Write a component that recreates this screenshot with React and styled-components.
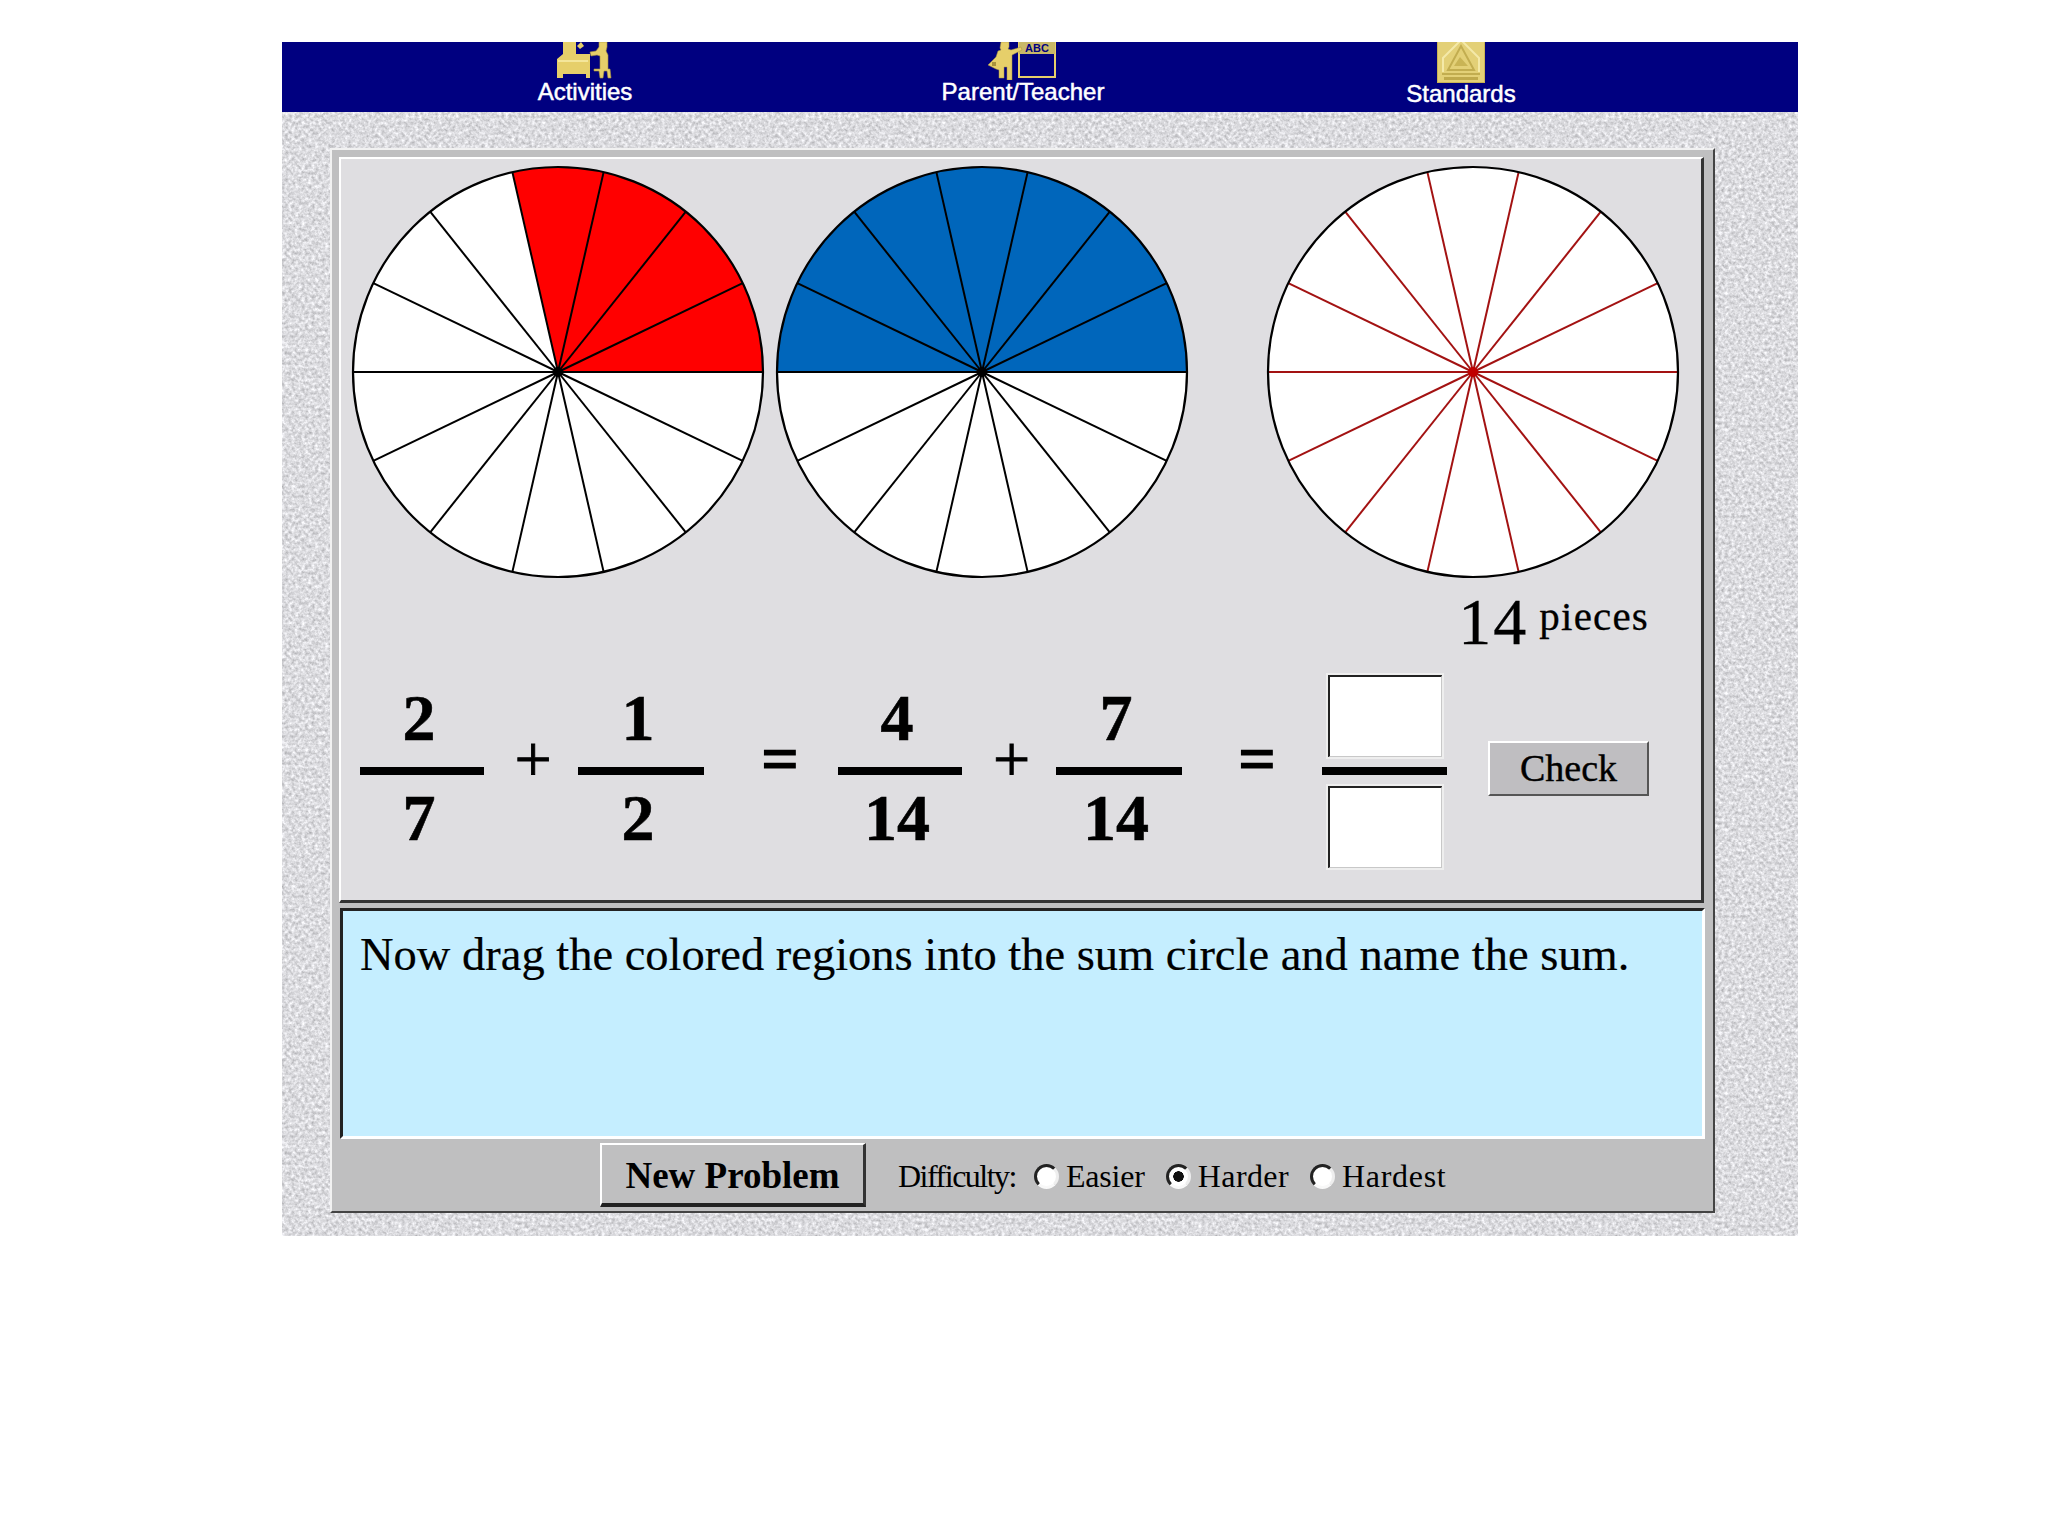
import React from 'react';
import styled, { createGlobalStyle } from 'styled-components';

const noise = "url(\"data:image/svg+xml,%3Csvg xmlns='http://www.w3.org/2000/svg' width='400' height='400'%3E%3Cfilter id='n' color-interpolation-filters='sRGB'%3E%3CfeTurbulence type='fractalNoise' baseFrequency='0.3' numOctaves='3' seed='7' stitchTiles='stitch'/%3E%3CfeColorMatrix values='0.42 0 0 0 0.65 0.42 0 0 0 0.65 0.42 0 0 0 0.665 0 0 0 0 1'/%3E%3C/filter%3E%3Crect width='400' height='400' filter='url(%23n)'/%3E%3C/svg%3E\")";

const GlobalStyle = createGlobalStyle`
	body {
		margin: 0;
		background: #fff;
		font-family: "Liberation Serif", "Times New Roman", serif;
		color: #000;
	}
`;

const Frame = styled.div`
	width: 1516px;
	height: 1194px;
	margin: 42px 0 0 282px;
	background-color: #dcdcdf;
	background-image: ${noise};
`;

const NavBar = styled.nav`
	display: grid;
	grid-template-columns: repeat(3, 438px);
	height: 70px;
	padding-left: 84px;
	background: #000080;
`;

const NavItem = styled.a`
	display: flex;
	flex-direction: column;
	align-items: center;
	color: #fff;
`;

const NavIcon = styled.div`
	height: 38px;
`;

const NavLabel = styled.span`
	margin-top: ${props => props.$drop || 0}px;
	font-family: "Liberation Sans", Arial, sans-serif;
	font-size: 24px;
	line-height: 24px;
	-webkit-text-stroke: 0.5px #fff;
`;

const Panel = styled.div`
	box-sizing: border-box;
	width: 1385px;
	height: 1065px;
	margin: 36px 0 0 48px;
	padding: 7px 9px 0 7px;
	background: #bfbfc0;
	border-style: solid;
	border-width: 2px;
	border-color: #f1f1f1 #444 #444 #f1f1f1;
`;

const Workspace = styled.div`
	box-sizing: border-box;
	height: 746px;
	background: #dfdee1;
	border-style: solid;
	border-width: 2px 3px 3px 2px;
	border-color: #fff #333 #333 #fff;
`;

const WheelRow = styled.div`
	display: flex;
	gap: 10px;
	padding: 6px 0 0 10px;
`;

const Wheel = styled.svg`
	display: block;
	width: 414px;
	height: 414px;
	margin-left: ${props => props.$offset || 0}px;
`;

const PiecesRow = styled.div`
	display: flex;
	justify-content: flex-end;
	align-items: flex-start;
	gap: 11px;
	margin-top: 10px;
	padding-right: 52px;
`;

const PieceCount = styled.span`
	font-size: 66px;
	line-height: 66px;
	letter-spacing: 2px;
	-webkit-text-stroke: 0.3px #000;
`;

const PieceLabel = styled.span`
	margin-top: 4px;
	font-size: 41px;
	line-height: 46px;
	letter-spacing: 1.2px;
	-webkit-text-stroke: 0.3px #000;
`;

const Equation = styled.div`
	display: flex;
	align-items: flex-start;
	margin-top: 19px;
	padding-left: 19px;
`;

const Fraction = styled.div`
	display: grid;
	grid-template-rows: 93px 8px 94px;
	justify-items: center;
	width: ${props => props.$width}px;
`;

const Bar = styled.div`
	width: 100%;
	background: #000;
`;

const Number = styled.div`
	font-size: 66px;
	line-height: 66px;
	font-weight: 700;
	padding-right: 6px;
	-webkit-text-stroke: 0.6px #000;
	align-self: ${props => (props.$top ? 'end' : 'start')};
	margin: ${props => (props.$top ? '0 0 16px' : '10px 0 0')};
`;

const Operator = styled.div`
	width: ${props => props.$width}px;
	box-sizing: border-box;
	padding-left: ${props => props.$shift}px;
	margin-top: ${props => props.$top}px;
	text-align: center;
	font-size: 66px;
	line-height: 66px;
	font-weight: ${props => (props.$bold ? 700 : 400)};
	-webkit-text-stroke: ${props => (props.$bold ? 1.2 : 0.9)}px #000;
`;

const AnswerBox = styled.input`
	box-sizing: border-box;
	display: block;
	width: 116px;
	height: 84px;
	margin: ${props => (props.$top ? 0 : '10px 0 0')};
	padding: 0;
	background: #fff;
	border-style: solid;
	border-width: 3px 2px 2px 3px;
	border-color: #222 #c8c8c8 #c8c8c8 #222;
	outline: 2px solid #eee;
	outline-offset: -1px;
`;

const CheckButton = styled.button`
	box-sizing: border-box;
	width: 161px;
	height: 55px;
	margin: 67px 0 0 41px;
	padding: 0 0 2px;
	background: #bfbec1;
	border-style: solid;
	border-width: 2px;
	border-color: #fff #555 #555 #fff;
	font-family: inherit;
	font-size: 38px;
	color: #000;
	-webkit-text-stroke: 0.4px #000;
`;

const Message = styled.div`
	box-sizing: border-box;
	width: 1365px;
	height: 231px;
	margin: 5px 0 0 1px;
	padding: 17px 0 0 17px;
	background: #c5eeff;
	border-style: solid;
	border-width: 3px;
	border-color: #222 #fff #fff #222;
	font-size: 46.5px;
	line-height: 54px;
	white-space: nowrap;
	-webkit-text-stroke: 0.2px #000;
`;

const Toolbar = styled.div`
	display: flex;
	align-items: center;
	height: 72px;
	padding-left: 261px;
`;

const NewButton = styled.button`
	box-sizing: border-box;
	width: 266px;
	height: 64px;
	margin-right: 32px;
	padding: 3px 0 0;
	background: #bfbfc0;
	border-style: solid;
	border-width: 2px 3px 4px 2px;
	border-color: #fff #333 #222 #fff;
	font-family: inherit;
	font-size: 37px;
	font-weight: 700;
	color: #000;
`;

const Difficulty = styled.div`
	display: flex;
	align-items: center;
	gap: 21px;
	padding-top: 2px;
	font-size: 32px;
`;

const DifficultyLabel = styled.span`
	margin-right: -3px;
	letter-spacing: -1.5px;
`;

const Option = styled.label`
	display: flex;
	align-items: center;
	gap: 7px;
	letter-spacing: ${props => props.$spacing}px;
`;

const Radio = styled.input`
	appearance: none;
	box-sizing: border-box;
	width: 25px;
	height: 25px;
	margin: 0;
	border-radius: 50%;
	background: ${props => (props.checked ? 'radial-gradient(circle, #111 0 5px, #fff 5.5px)' : '#fff')};
	border-style: solid;
	border-width: 3px;
	border-color: #222 #eee #f8f8f8 #222;
`;

const GOLD = '#e6cf6a';
const GOLD_DARK = '#a8923c';

const ActivitiesIcon = () => (
	<svg width="90" height="38" viewBox="0 0 90 38">
		<path d="M23 0h13v13H23z" fill={GOLD} />
		<path d="M17 17l6-5h27v24h-4v-4H23v4h-6z" fill={GOLD} />
		<path d="M18 18h30v2H18z" fill="#f4e69a" />
		<path d="M41 0l3 4-4 3-3-3z" fill={GOLD} />
		<path d="M50 10l6-1 3-4V0h8v5l-1 4 2 4v14h2l1 9h-3l-1-7h-3l-1 7h-3l-1-7h-5v-2h6V14l-3-1-6 1z" fill={GOLD} stroke={GOLD_DARK} strokeWidth="0.6" />
	</svg>
);

const TeacherIcon = () => (
	<svg width="90" height="38" viewBox="7 0 90 38">
		<rect x="48" y="-4" width="36" height="39" fill="none" stroke={GOLD} strokeWidth="2" />
		<rect x="48" y="-2" width="36" height="14" fill="#c8b868" />
		<text x="66" y="10" textAnchor="middle" fontFamily="Liberation Sans, sans-serif" fontSize="11" fontWeight="700" fill="#000080">ABC</text>
		<path d="M30 0h8v5l-1 2 3 1 10-3 1 3-10 5v25h-5V25h-3v11h-5V28l-3-1-8-4 8-8 2-6 3-1-1-2z" fill={GOLD} stroke={GOLD_DARK} strokeWidth="0.5" />
		<rect x="21" y="20" width="4" height="4" fill={GOLD_DARK} />
	</svg>
);

const StandardsIcon = () => (
	<svg width="48" height="41" viewBox="0 0 48 41">
		<rect width="48" height="41" fill="#e3d077" />
		<rect x="0.5" y="-1" width="47" height="41.5" fill="none" stroke="#c9b455" />
		<path d="M6 30L6 16 24 -2 42 16V30" fill="none" stroke="#f4e9a8" strokeWidth="2" />
		<path d="M11 28L24 4 37 28z" fill="none" stroke="#c2ad50" strokeWidth="2" />
		<path d="M17 24l6-9 8 9z" fill="#c9b455" />
		<rect x="5" y="31" width="38" height="2" fill="#c2ad50" />
		<rect x="7" y="35" width="34" height="3" fill="#bfa94c" />
	</svg>
);

const RADIUS = 205;
const CENTER = 207;
const PIECES = 14;

const point = (step) => {
	const angle = (step * 2 * Math.PI) / PIECES;
	return [CENTER + RADIUS * Math.cos(angle), CENTER - RADIUS * Math.sin(angle)];
};

// wheel cut in 14 pieces, the first `filled` pieces coloured from 3 o'clock
const FractionWheel = ({ filled = 0, color, spoke = '#000', hub = '#000', offset }) => {
	const [ex, ey] = point(filled);
	const spokes = Array.from({ length: PIECES }, (_, i) => point(i));
	return (
		<Wheel viewBox="0 0 414 414" $offset={offset}>
			<circle cx={CENTER} cy={CENTER} r={RADIUS} fill="#fff" />
			{filled > 0 && (
				<path
					d={`M${CENTER} ${CENTER}L${CENTER + RADIUS} ${CENTER}A${RADIUS} ${RADIUS} 0 0 0 ${ex} ${ey}Z`}
					fill={color}
				/>
			)}
			{spokes.map(([x, y], i) => (
				<line key={i} x1={CENTER} y1={CENTER} x2={x} y2={y} stroke={spoke} strokeWidth="2" />
			))}
			<circle cx={CENTER} cy={CENTER} r={RADIUS} fill="none" stroke="#000" strokeWidth="2.2" />
			<circle cx={CENTER} cy={CENTER} r="5" fill={hub} />
		</Wheel>
	);
};

const Frac = ({ top, bottom, width }) => (
	<Fraction $width={width}>
		<Number $top>{top}</Number>
		<Bar />
		<Number>{bottom}</Number>
	</Fraction>
);

const App = () => (
	<>
		<GlobalStyle />
		<Frame>
			<NavBar>
				<NavItem>
					<NavIcon><ActivitiesIcon /></NavIcon>
					<NavLabel>Activities</NavLabel>
				</NavItem>
				<NavItem>
					<NavIcon><TeacherIcon /></NavIcon>
					<NavLabel>Parent/Teacher</NavLabel>
				</NavItem>
				<NavItem>
					<NavIcon><StandardsIcon /></NavIcon>
					<NavLabel $drop={2}>Standards</NavLabel>
				</NavItem>
			</NavBar>
			<Panel>
				<Workspace>
					<WheelRow>
						<FractionWheel filled={4} color="#ff0000" />
						<FractionWheel filled={7} color="#0066bb" />
						<FractionWheel spoke="#a31212" hub="#c00000" offset={67} />
					</WheelRow>
					<PiecesRow>
						<PieceCount>14</PieceCount>
						<PieceLabel>pieces</PieceLabel>
					</PiecesRow>
					<Equation>
						<Frac top="2" bottom="7" width={124} />
						<Operator $width={94} $shift={4} $top={52}>+</Operator>
						<Frac top="1" bottom="2" width={126} />
						<Operator $width={134} $shift={18} $top={52} $bold>=</Operator>
						<Frac top="4" bottom="14" width={124} />
						<Operator $width={94} $shift={5} $top={52}>+</Operator>
						<Frac top="7" bottom="14" width={126} />
						<Operator $width={140} $shift={10} $top={52} $bold>=</Operator>
						<Fraction $width={125}>
							<AnswerBox $top readOnly />
							<Bar />
							<AnswerBox readOnly />
						</Fraction>
						<CheckButton>Check</CheckButton>
					</Equation>
				</Workspace>
				<Message>Now drag the colored regions into the sum circle and name the sum.</Message>
				<Toolbar>
					<NewButton>New Problem</NewButton>
					<Difficulty>
						<DifficultyLabel>Difficulty:</DifficultyLabel>
						<Option $spacing={-0.2}><Radio type="radio" name="level" readOnly />Easier</Option>
						<Option $spacing={0.4}><Radio type="radio" name="level" checked readOnly />Harder</Option>
						<Option $spacing={0.7}><Radio type="radio" name="level" readOnly />Hardest</Option>
					</Difficulty>
				</Toolbar>
			</Panel>
		</Frame>
	</>
);

export default App;
